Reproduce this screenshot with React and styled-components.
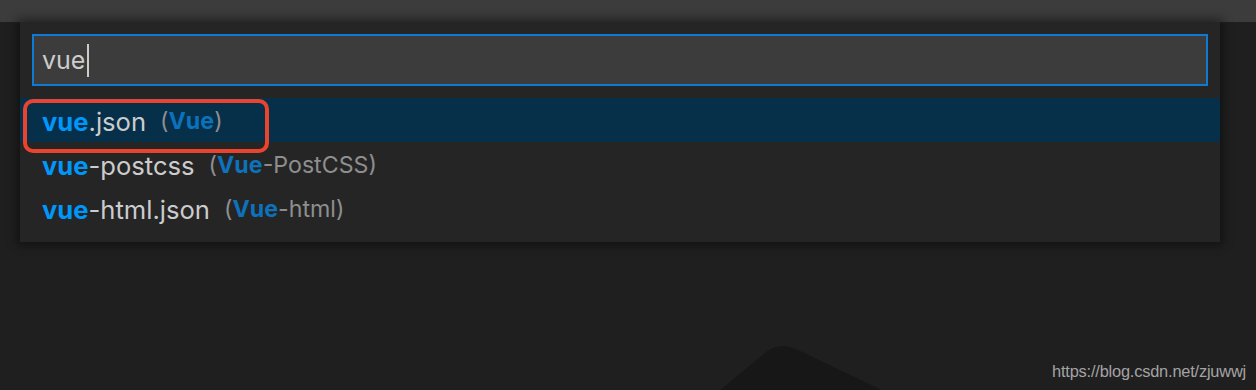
import React from 'react';
import styled, { createGlobalStyle } from 'styled-components';

const GlobalStyle = createGlobalStyle`
  html, body {
    margin: 0;
    padding: 0;
    background: #1f1f1f;
  }
`;

const Screen = styled.div`
  position: relative;
  width: 1256px;
  height: 390px;
  overflow: hidden;
  background: #1f1f1f;
  font-family: Inter, 'Liberation Sans', sans-serif;
`;

const TitleBar = styled.div`
  height: 22px;
  background: #3c3c3c;
`;

const QuickPick = styled.div`
  position: relative;
  z-index: 1;
  width: 1200px;
  margin-left: 20px;
  padding-top: 12px;
  padding-bottom: 12px;
  background: #252526;
  box-shadow: 0 0 10px 3px rgba(0, 0, 0, 0.45);
`;

const InputBox = styled.div`
  display: flex;
  align-items: center;
  height: 52px;
  margin: 0 12px 12px;
  padding-left: 8px;
  box-sizing: border-box;
  background: #3c3c3c;
  border: 2px solid #0e7ad2;
  color: #cccccc;
  font-size: 25px;
`;

const Caret = styled.span`
  display: inline-block;
  width: 2px;
  height: 33px;
  margin-left: 2px;
  background: #cccccc;
`;

const List = styled.div`
  display: flex;
  flex-direction: column;
`;

const Row = styled.div`
  position: relative;
  display: flex;
  align-items: center;
  height: 44px;
  padding: 2px 0 0 22px;
  box-sizing: border-box;
  background: ${(p) => (p.$selected ? '#062f4a' : 'transparent')};
  font-size: 25.6px;
  white-space: nowrap;
`;

const Label = styled.span`
  color: #cccccc;
`;

const Match = styled.span`
  color: ${(p) => (p.$dim ? '#0b72bb' : '#0097fb')};
  font-weight: 700;
`;

const Description = styled.span`
  margin-left: 14px;
  color: #8e8e8e;
  font-size: 23.2px;
`;

const Callout = styled.div`
  position: absolute;
  left: 3px;
  top: 1px;
  width: 246px;
  height: 54px;
  box-sizing: border-box;
  border: 4px solid #ea442e;
  border-radius: 10px;
  pointer-events: none;
`;

const Logo = styled.svg`
  position: absolute;
  left: 700px;
  top: 330px;
`;

const Watermark = styled.div`
  position: absolute;
  right: 10px;
  bottom: 9px;
  color: #a3a3a3;
  font-family: 'Liberation Sans', Arial, sans-serif;
  font-size: 16.4px;
  letter-spacing: -0.2px;
`;

const items = [
  { rest: '.json', descRest: ')', selected: true },
  { rest: '-postcss', descRest: '-PostCSS)' },
  { rest: '-html.json', descRest: '-html)' }
];

const App = () => (
  <Screen>
    <GlobalStyle />
    <TitleBar />
    <QuickPick>
      <InputBox>
        vue
        <Caret />
      </InputBox>
      <List>
        {items.map((item) => (
          <Row key={item.rest} $selected={item.selected}>
            <Label>
              <Match>vue</Match>
              {item.rest}
            </Label>
            <Description>
              (<Match $dim>Vue</Match>
              {item.descRest}
            </Description>
            {item.selected && <Callout />}
          </Row>
        ))}
      </List>
    </QuickPick>
    <Logo width="200" height="60" viewBox="0 0 200 60">
      <path d="M18 62 L66 22 Q80 11 98 20 L186 62 Z" fill="#171717" />
    </Logo>
    <Watermark>https://blog.csdn.net/zjuwwj</Watermark>
  </Screen>
);

export default App;
